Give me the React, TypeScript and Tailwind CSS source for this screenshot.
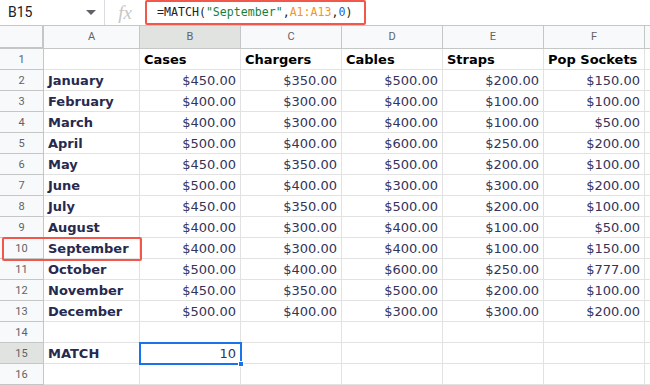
const months = [
  'January', 'February', 'March', 'April', 'May', 'June',
  'July', 'August', 'September', 'October', 'November', 'December',
]

const values = [
  ['$450.00', '$350.00', '$500.00', '$200.00', '$150.00'],
  ['$400.00', '$300.00', '$400.00', '$100.00', '$100.00'],
  ['$400.00', '$300.00', '$400.00', '$100.00', '$50.00'],
  ['$500.00', '$400.00', '$600.00', '$250.00', '$200.00'],
  ['$450.00', '$350.00', '$500.00', '$200.00', '$100.00'],
  ['$500.00', '$400.00', '$300.00', '$300.00', '$200.00'],
  ['$450.00', '$350.00', '$500.00', '$200.00', '$100.00'],
  ['$400.00', '$300.00', '$400.00', '$100.00', '$50.00'],
  ['$400.00', '$300.00', '$400.00', '$100.00', '$150.00'],
  ['$500.00', '$400.00', '$600.00', '$250.00', '$777.00'],
  ['$450.00', '$350.00', '$500.00', '$200.00', '$100.00'],
  ['$500.00', '$400.00', '$300.00', '$300.00', '$200.00'],
]

const headers = ['Cases', 'Chargers', 'Cables', 'Straps', 'Pop Sockets']
const letters = ['B', 'C', 'D', 'E', 'F']

const cellFont = { fontFamily: '"DejaVu Sans", Verdana, sans-serif' }

// one grid row: row number + A..F + stub of G
const Row = ({ n, a, cells, bold, active }: { n: number; a?: string; cells?: string[]; bold?: boolean; active?: boolean }) => (
  <div className="flex h-[21px]">
    <div
      className={`w-[44px] shrink-0 border-r border-b border-[#c4c7c5] pt-[1px] text-center text-[11px] leading-[19px] text-[#5f6368] ${active ? 'bg-[#e1e3e1]' : 'bg-[#f8f9fa]'}`}
      style={{ fontFamily: 'Roboto, Arial, sans-serif' }}
    >
      {n}
    </div>
    <div className="w-[96px] shrink-0 border-r border-b border-[#e2e2e2] pl-[4px] pt-[2px] text-[13px] leading-[18px] font-bold text-[#262a4f] overflow-hidden whitespace-nowrap" style={cellFont}>
      {a}
    </div>
    {letters.map((l, i) => (
      <div
        key={l}
        className={`w-[101px] shrink-0 border-r border-b border-[#e2e2e2] px-[4px] pt-[2px] text-[13px] leading-[18px] whitespace-nowrap overflow-hidden ${bold ? 'font-bold text-black text-left' : 'text-right text-[#33345a]'}`}
        style={cellFont}
      >
        {cells?.[i]}
      </div>
    ))}
    <div className="flex-1 border-b border-[#e2e2e2]" />
  </div>
)

export default function App() {
  return (
    <div className="w-[650px] h-[385px] overflow-hidden bg-white relative">
      {/* formula bar */}
      <div className="flex items-center h-[26px] border-b border-[#c4c7c5]">
        <div className="w-[105px] shrink-0 flex items-center justify-between pl-[8px] pr-[8px] h-full border-r border-[#dadce0]" style={{ fontFamily: 'Roboto, Arial, sans-serif' }}>
          <span className="text-[14px] text-[#202124]">B15</span>
          <svg width="10" height="6" viewBox="0 0 10 6"><path d="M0 0h10L5 5z" fill="#5f6368" /></svg>
        </div>
        <div className="w-[40px] shrink-0 text-center text-[19px] italic text-[#c6c6c6] leading-none" style={{ fontFamily: '"Liberation Serif", serif' }}>
          fx
        </div>
        <div
          className="h-[25px] w-[221px] border-[2.5px] border-[#f1574a] rounded-[2px] flex items-center pl-[10px] text-[11.6px] text-[#202124] whitespace-nowrap"
          style={{ fontFamily: '"DejaVu Sans Mono", "Liberation Mono", monospace' }}
        >
          =MATCH(<span className="text-[#188038]">"September"</span>,<span className="text-[#f29727]">A1:A13</span>,<span className="text-[#1a5fd6]">0</span>)
        </div>
      </div>

      {/* column headers */}
      <div className="flex h-[23px] bg-[#f8f9fa]" style={{ fontFamily: 'Roboto, Arial, sans-serif' }}>
        <div className="w-[44px] shrink-0 border-r-[2px] border-b-[2px] border-[#c4c7c5]" />
        <div className="w-[96px] shrink-0 border-r border-b border-[#c4c7c5] text-center text-[11px] leading-[22px] text-[#5f6368]">A</div>
        {letters.map((l) => (
          <div key={l} className={`w-[101px] shrink-0 border-r border-b border-[#c4c7c5] text-center text-[11px] leading-[22px] text-[#5f6368] ${l === 'B' ? 'bg-[#e1e3e1]' : ''}`}>
            {l}
          </div>
        ))}
        <div className="flex-1 border-b border-[#c4c7c5]" />
      </div>

      <Row n={1} cells={headers} bold />
      {months.map((m, i) => (
        <Row key={m} n={i + 2} a={m} cells={values[i]} />
      ))}
      <Row n={14} />
      <Row n={15} a="MATCH" cells={['10']} active />
      <Row n={16} />

      {/* highlight around September */}
      <div className="absolute left-[2px] top-[237px] w-[140px] h-[24px] border-[2.5px] border-[#f1574a] rounded-[2px]" />

      {/* selected cell B15 */}
      <div className="absolute left-[139px] top-[342px] w-[103px] h-[23px] border-2 border-[#1a73e8]" />
      <div className="absolute left-[238px] top-[361px] w-[6px] h-[6px] bg-[#1a73e8] border border-white" />
    </div>
  )
}
